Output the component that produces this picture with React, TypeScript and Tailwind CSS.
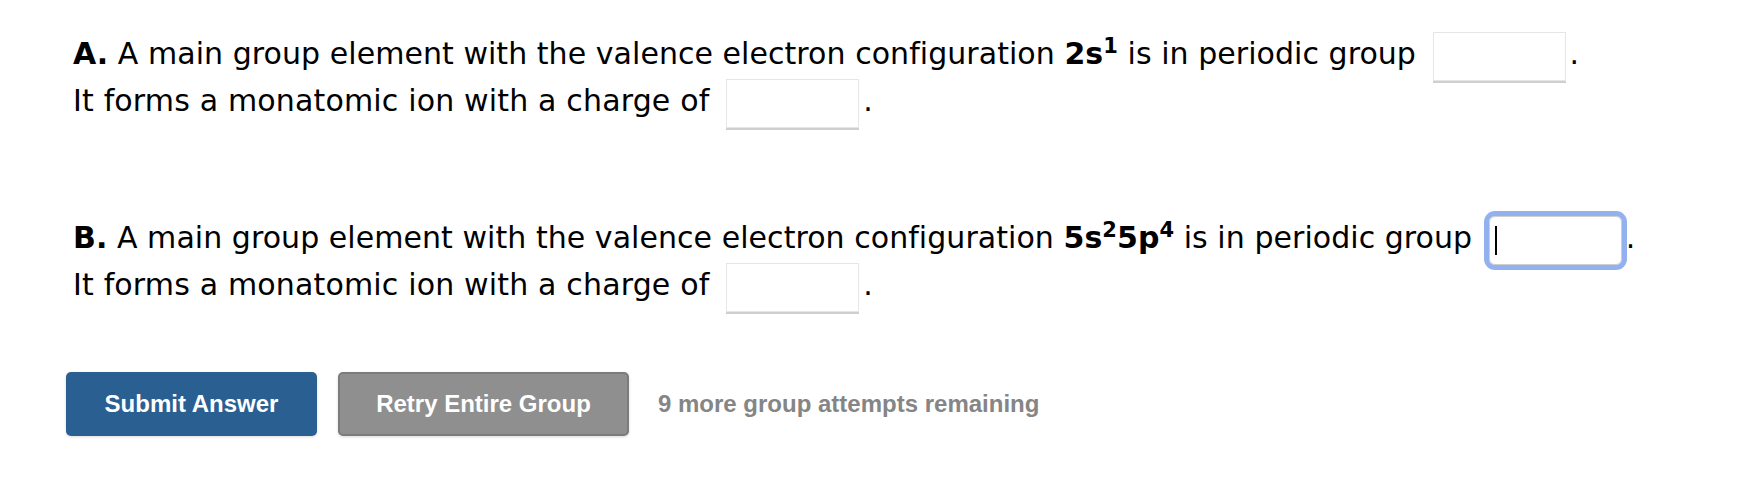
import React from "react";

function Blank({ focused = false }: { focused?: boolean }) {
  if (focused) {
    return (
      <span className="inline-block align-[-17px] ml-[7px] mr-[4px] rounded-[6px] outline-[5px] outline-solid outline-[#94b1ef] h-[49px] w-[133px] bg-white border border-[#cfcfcf] relative">
        <span className="absolute left-[5px] top-[9px] h-[29px] w-[2px] bg-black" />
      </span>
    );
  }
  return (
    <span className="inline-block align-[-17px] ml-[7px] mr-[4px] h-[49px] w-[133px] bg-white border border-[#e6e6e6] shadow-[0_2px_0_#cfcfcf]" />
  );
}

function Question({
  label,
  config,
  focused,
}: {
  label: string;
  config: React.ReactNode;
  focused?: boolean;
}) {
  return (
    <div className="text-[30px] text-black" style={{ fontFamily: '"DejaVu Sans", Verdana, sans-serif' }}>
      <div className="h-[47px] leading-[47px] tracking-[0.05px] whitespace-nowrap">
        <b>{label}</b> A main group element with the valence electron configuration <b>{config}</b> is in periodic
        group{" "}
        <Blank focused={focused} />.
      </div>
      <div className="h-[47px] leading-[47px] tracking-[0.16px] whitespace-nowrap">
        It forms a monatomic ion with a charge of{" "}
        <Blank />.
      </div>
    </div>
  );
}

export default function App() {
  return (
    <div className="w-[1746px] h-[504px] bg-white pl-[73px] pt-[30px]">
      <Question
        label="A."
        config={
          <>
            2s<sup className="text-[21px] -top-[11px]">1</sup>
          </>
        }
      />
      <div className="mt-[90px]">
        <Question
          label="B."
          focused
          config={
            <>
              5s<sup className="text-[21px] -top-[11px]">2</sup>5p<sup className="text-[21px] -top-[11px]">4</sup>
            </>
          }
        />
      </div>
      <div
        className="mt-[64px] -ml-[7px] flex items-center gap-[21px] text-[24px] font-bold"
        style={{ fontFamily: '"Liberation Sans", Arial, sans-serif' }}
      >
        <button className="h-[64px] w-[251px] rounded-[5px] bg-[#2a5f91] text-white shadow-[0_1px_3px_rgba(0,0,0,0.15)]">
          Submit Answer
        </button>
        <button className="h-[64px] w-[291px] rounded-[5px] bg-[#8f8f8f] border-2 border-[#7c7c7c] text-white shadow-[0_1px_3px_rgba(0,0,0,0.15)]">
          Retry Entire Group
        </button>
        <span className="ml-[8px] text-[#858585] text-[24px]">9 more group attempts remaining</span>
      </div>
    </div>
  );
}
